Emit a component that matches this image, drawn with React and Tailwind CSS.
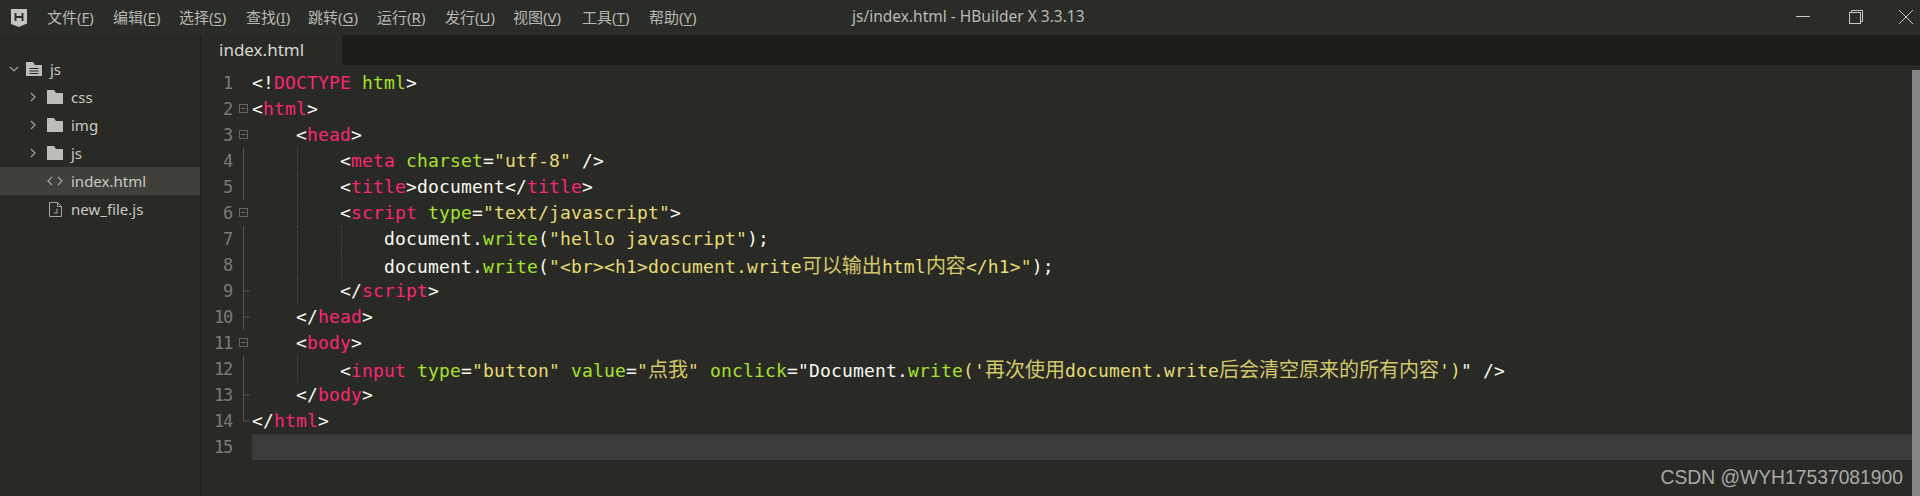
import React from 'react';

const menus = [
	['文件', 'F', 'w-[66px]'], ['编辑', 'E', 'w-[66px]'], ['选择', 'S', 'w-[67px]'], ['查找', 'I', 'w-[62px]'], ['跳转', 'G', 'w-[69px]'],
	['运行', 'R', 'w-[68px]'], ['发行', 'U', 'w-[68px]'], ['视图', 'V', 'w-[69px]'], ['工具', 'T', 'w-[67px]'], ['帮助', 'Y', 'w-[60px]'],
];

// token colours
const P = 'text-[#f92672]';
const G = 'text-[#a6e22e]';
const Y = 'text-[#e6db74]';
const W = 'text-[#f8f8f2]';

// [text, colour, isCjk]
const lines = [
	{ fold: '', guides: [], tokens: [['<!', W], ['DOCTYPE', P], [' ', W], ['html', G], ['>', W]] },
	{ fold: 'box', guides: [], tokens: [['<', W], ['html', P], ['>', W]] },
	{ fold: 'box', guides: [], tokens: [['    <', W], ['head', P], ['>', W]] },
	{ fold: 'line', guides: [297], tokens: [['        <', W], ['meta', P], [' ', W], ['charset', G], ['=', W], ['"utf-8"', Y], [' />', W]] },
	{ fold: 'line', guides: [297], tokens: [['        <', W], ['title', P], ['>document</', W], ['title', P], ['>', W]] },
	{ fold: 'box', guides: [297], tokens: [['        <', W], ['script', P], [' ', W], ['type', G], ['=', W], ['"text/javascript"', Y], ['>', W]] },
	{ fold: 'line', guides: [297, 341], tokens: [['            document.', W], ['write', G], ['(', W], ['"hello javascript"', Y], [');', W]] },
	{ fold: 'line', guides: [297, 341], tokens: [['            document.', W], ['write', G], ['(', W], ['"<br><h1>document.write', Y], ['可以输出', Y, true], ['html', Y], ['内容', Y, true], ['</h1>"', Y], [');', W]] },
	{ fold: 'tick', guides: [297], tokens: [['        </', W], ['script', P], ['>', W]] },
	{ fold: 'tick', guides: [], tokens: [['    </', W], ['head', P], ['>', W]] },
	{ fold: 'box', guides: [], tokens: [['    <', W], ['body', P], ['>', W]] },
	{ fold: 'line', guides: [297], tokens: [['        <', W], ['input', P], [' ', W], ['type', G], ['=', W], ['"button"', Y], [' ', W], ['value', G], ['=', W], ['"', Y], ['点我', Y, true], ['"', Y], [' ', W], ['onclick', G], ['=', W], ['"Document.', W], ['write', G], ['(', Y], ["'", Y], ['再次使用', Y, true], ['document.write', Y], ['后会清空原来的所有内容', Y, true], ["')", Y], ['"', W], [' />', W]] },
	{ fold: 'tick', guides: [], tokens: [['    </', W], ['body', P], ['>', W]] },
	{ fold: 'end', guides: [], tokens: [['</', W], ['html', P], ['>', W]] },
	{ fold: '', guides: [], tokens: [], active: true },
];

const FoldMark = ({ type }) => {
	if (type === 'box') {
		return (
			<svg width="9" height="26" viewBox="0 0 9 26" fill="none" stroke="#65655f">
				<rect x="0.5" y="8.5" width="8" height="8" />
				<path d="M2 12.5h5" />
			</svg>
		);
	}
	if (type === 'line') {
		return (
			<svg width="9" height="26" viewBox="0 0 9 26" fill="none" stroke="#55554f">
				<path d="M4.5 0v26" />
			</svg>
		);
	}
	if (type === 'tick') {
		return (
			<svg width="11" height="26" viewBox="0 0 11 26" fill="none" stroke="#55554f">
				<path d="M4.5 0v26M4.5 13h6" />
			</svg>
		);
	}
	if (type === 'end') {
		return (
			<svg width="11" height="26" viewBox="0 0 11 26" fill="none" stroke="#55554f">
				<path d="M4.5 0v13h6" />
			</svg>
		);
	}
	return <span className="w-[9px]" />;
};

const ChevronRight = () => (
	<svg width="7" height="10" viewBox="0 0 7 10" fill="none" stroke="#a5a5a0" strokeWidth="1.2">
		<path d="M1 1l4 4-4 4" />
	</svg>
);

const FolderIcon = () => (
	<svg width="16" height="14" viewBox="0 0 16 14" fill="#bdbdb8">
		<path d="M0 0h7l2 3h7v11H0z" />
	</svg>
);

const SideRow = ({ icon, active, chevron, name }) => (
	<div className={`flex h-[28px] items-center ${active ? 'bg-[#40403a]' : ''}`}>
		<span className="flex w-[47px] pl-[30px]">{chevron && <ChevronRight />}</span>
		<span className="flex w-[24px]">{icon}</span>
		<span className="text-[#c9c9c3]">{name}</span>
	</div>
);

const App = () => {
	return (
		<div className="relative flex h-[496px] w-[1920px] flex-col overflow-hidden bg-[#292a25] font-['Noto_Sans','Noto_Sans_CJK_SC',sans-serif]">
			{/* title bar */}
			<div className="relative flex h-[35px] shrink-0 items-center bg-[#2a2c27] text-[15px] text-[#b9b9b3]">
				<svg className="ml-[11px]" width="16" height="20" viewBox="0 0 16 20">
					<path d="M0 1h16v14.5L8 19 0 16z" fill="#c4c4c0" />
					<path d="M4.5 5v8M11.5 5v8M4.5 9h7" stroke="#2a2c27" strokeWidth="1.8" fill="none" />
				</svg>
				<div className="ml-[20px] flex">
					{menus.map(([label, key, width]) => (
						<span key={key} className={`${width} whitespace-nowrap`}>
							{label}(<span className="underline underline-offset-2">{key}</span>)
						</span>
					))}
				</div>
				<div className="absolute left-[852px] top-[5px] whitespace-nowrap text-[15.5px]">js/index.html - HBuilder X 3.3.13</div>
				<div className="ml-auto mb-[2px] mr-[7px] flex items-center">
					<svg width="14" height="14" viewBox="0 0 14 14" stroke="#c8c8c4" fill="none" strokeWidth="1">
						<path d="M0 6.5h14" />
					</svg>
					<svg className="ml-[39px]" width="14" height="14" viewBox="0 0 14 14" stroke="#c8c8c4" fill="none" strokeWidth="1">
						<rect x="0.5" y="2.5" width="11" height="11" />
						<path d="M2.5 2.5V.5h11v11h-2" />
					</svg>
					<svg className="ml-[36px]" width="14" height="14" viewBox="0 0 14 14" stroke="#c8c8c4" fill="none" strokeWidth="1">
						<path d="M0 0l14 14M14 0L0 14" />
					</svg>
				</div>
			</div>

			<div className="flex min-h-0 flex-1">
				{/* project tree */}
				<div className="w-[200px] shrink-0 pt-[20px] text-[15px]">
					<div className="flex h-[28px] items-center">
						<svg className="ml-[9px]" width="10" height="7" viewBox="0 0 10 7" fill="none" stroke="#a5a5a0" strokeWidth="1.2">
							<path d="M1 1l4 4 4-4" />
						</svg>
						<svg className="ml-[7px]" width="16" height="14" viewBox="0 0 16 14">
							<path d="M0 0h7l2 3h7v11H0z" fill="#bdbdb8" />
							<path d="M3.5 6.5h9M3.5 9h9M3.5 11.5h9" stroke="#292a25" strokeWidth="1" />
						</svg>
						<span className="ml-[8px] text-[#c9c9c3]">js</span>
					</div>
					<SideRow chevron icon={<FolderIcon />} name="css" />
					<SideRow chevron icon={<FolderIcon />} name="img" />
					<SideRow chevron icon={<FolderIcon />} name="js" />
					<SideRow
						active
						name="index.html"
						icon={
							<svg width="16" height="10" viewBox="0 0 16 10" fill="none" stroke="#a5a5a0" strokeWidth="1.2">
								<path d="M5 1L1 5l4 4M11 1l4 4-4 4" />
							</svg>
						}
					/>
					<SideRow
						name="new_file.js"
						icon={
							<svg className="ml-[2px]" width="13" height="15" viewBox="0 0 13 15" fill="none" stroke="#a5a5a0" strokeWidth="1">
								<path d="M.5.5h8l4 4v10H.5zM8.5.5v4h4M8 6.5V11H5" />
							</svg>
						}
					/>
				</div>

				{/* editor */}
				<div className="flex min-w-0 flex-1 flex-col border-l border-[#1d1e1a]">
					<div className="flex h-[30px] shrink-0 bg-[#1d1e1a]">
						<div className="flex w-[141px] items-center bg-[#292a25] pl-[18px] text-[17px] text-[#d6d6d0]">index.html</div>
					</div>
					<div className="flex min-h-0 flex-1 pt-[5px]">
						<div className="min-w-0 flex-1">
							{lines.map((line, i) => (
								<div key={i} className="relative flex h-[26px]">
									<span className="w-[31px] text-right font-['DejaVu_Sans_Mono',monospace] text-[17px] leading-[26px] tracking-[-1.2px] text-[#7b7b74]">{i + 1}</span>
									<span className="ml-[7px] flex w-[13px] justify-start"><FoldMark type={line.fold} /></span>
									{line.guides.map((x) => (
										<span key={x} style={{ left: x - 201 }} className="absolute inset-y-0 border-l border-dotted border-[#4d4d47]" />
									))}
									<div className={`flex-1 whitespace-pre font-['DejaVu_Sans_Mono','Noto_Sans_CJK_SC',monospace] text-[18px] leading-[26px] tracking-[0.16px] ${line.active ? 'bg-[#3b3b3b]' : ''}`}>
										{line.tokens.map(([text, color, cjk], j) => (
											<span key={j} className={cjk ? "font-['Noto_Sans_CJK_SC'] text-[20px] tracking-normal text-[#d2c76a]" : color}>{text}</span>
										))}
									</div>
								</div>
							))}
						</div>
						<div className="w-[8px] shrink-0 bg-[#868686]" />
					</div>
				</div>
			</div>

			{/* watermark */}
			<div className="absolute right-[17px] top-[466px] font-['Liberation_Sans',sans-serif] text-[19.3px] leading-[24px] text-[#a9a9a5]">CSDN @WYH17537081900</div>
		</div>
	);
};

export default App;
